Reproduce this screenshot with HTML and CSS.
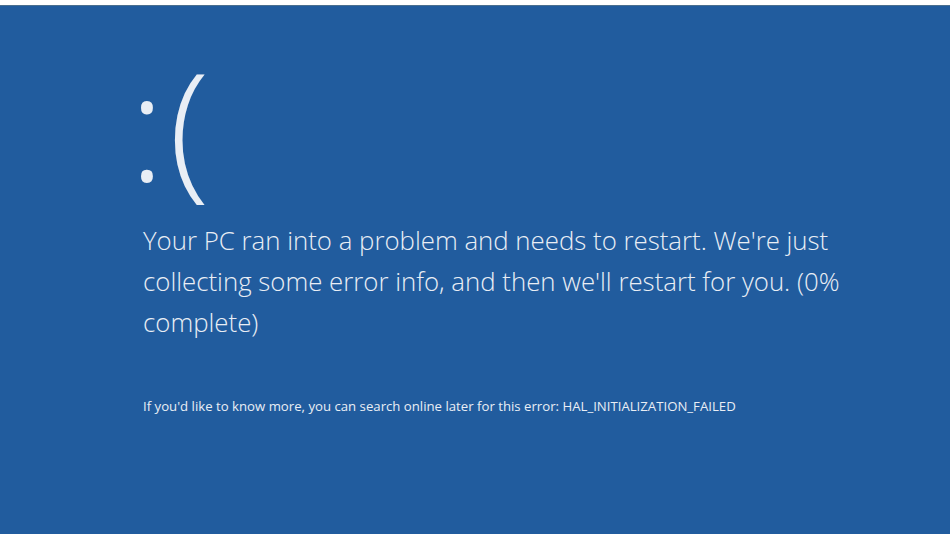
FILE: index.html
```html
<!DOCTYPE html>
<html lang="en">
<head>
<meta charset="utf-8">
<title>Your PC ran into a problem</title>
<link rel="stylesheet" href="styles.css">
</head>
<body>
<div class="screen">
  <main class="content">
    <div class="face">:(</div>
    <p class="message">Your PC ran into a problem and needs to restart. We're just collecting some error info, and then we'll restart for you. (0% complete)</p>
    <p class="details">If you'd like to know more, you can search online later for this error: HAL_INITIALIZATION_FAILED</p>
  </main>
</div>
</body>
</html>
```

FILE: styles.css
```css
html, body {
  margin: 0;
  padding: 0;
  height: 100%;
  background: #ffffff;
}

.screen {
  margin-top: 5px;
  height: calc(100% - 5px);
  background: #215c9e;
  border-top: 1px solid #4a6f8f;
  box-sizing: border-box;
  color: #e9eef5;
  font-family: "Open Sans", "Noto Sans", sans-serif;
}

.content {
  padding: 22px 0 0 143px;
  width: 720px;
}

.face {
  font-weight: 300;
  font-size: 150px;
  line-height: 190px;
  height: 192px;
  margin-left: -14px;
  letter-spacing: 4px;
}

.message {
  margin: 0;
  font-weight: 300;
  font-size: 25.8px;
  line-height: 41px;
}

.details {
  margin: 53px 0 0;
  font-weight: 400;
  font-size: 13.2px;
  line-height: 20px;
  white-space: nowrap;
}
```
